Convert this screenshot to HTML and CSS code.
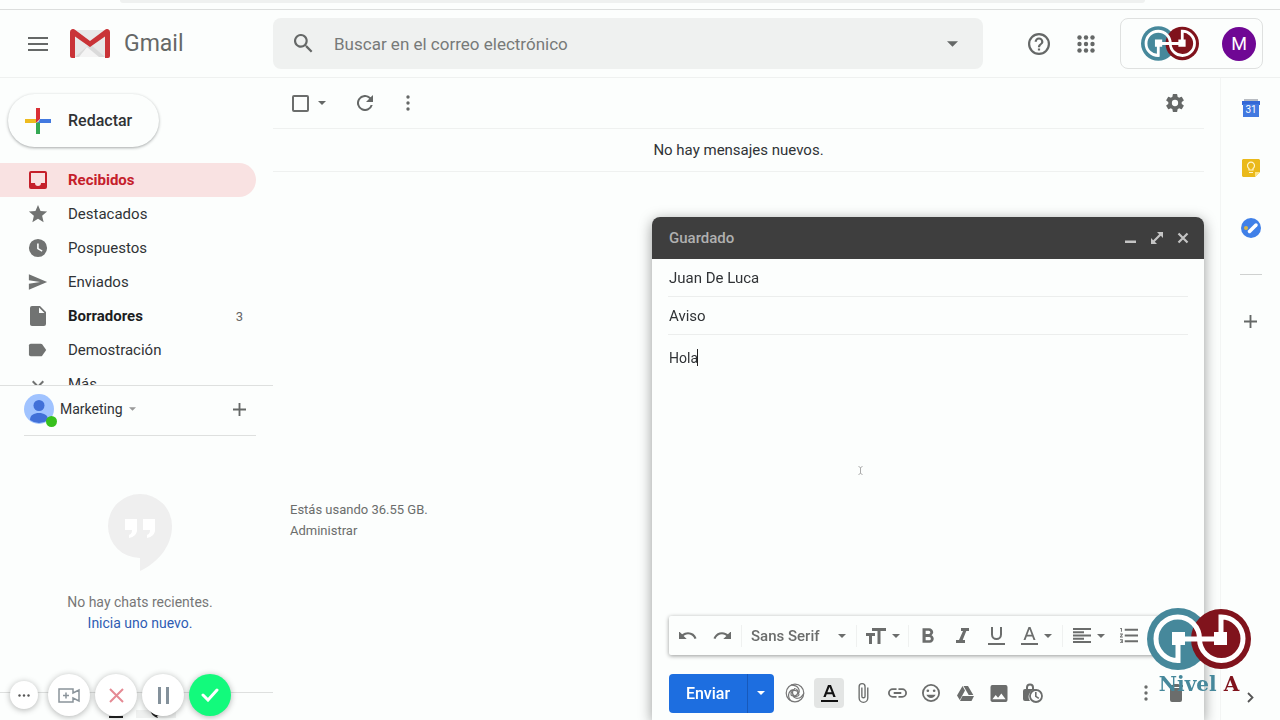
FILE: index.html
```html
<!DOCTYPE html>
<html lang="es">
<head>
    <meta charset="UTF-8">
    <meta name="viewport" content="width=device-width, initial-scale=1.0">
    <title>Recibidos - Gmail</title>
    <link rel="stylesheet" href="styles.css">
</head>
<body>

<svg class="sprite" aria-hidden="true">
    <symbol id="caret" viewBox="0 0 10 5"><path d="M0 0h10L5 5z"/></symbol>
    <symbol id="dots" viewBox="0 0 4 16"><circle cx="2" cy="2" r="1.7"/><circle cx="2" cy="8" r="1.7"/><circle cx="2" cy="14" r="1.7"/></symbol>
    <symbol id="plus" viewBox="0 0 14 14"><path d="M6 0h2v6h6v2H8v6H6V8H0V6h6z"/></symbol>
    <symbol id="inbox" viewBox="2 2 20 20"><path d="M19 3H5a2 2 0 0 0-2 2v14a2 2 0 0 0 2 2h14a2 2 0 0 0 2-2V5a2 2 0 0 0-2-2zm0 12h-4a3 3 0 0 1-6 0H5V5h14z"/></symbol>
    <symbol id="star" viewBox="1 1 22 22"><path d="M12 17.27 18.18 21l-1.64-7.03L22 9.24l-7.19-.61L12 2 9.19 8.63 2 9.24l5.46 4.73L5.82 21z"/></symbol>
    <symbol id="clock" viewBox="1 1 22 22"><path d="M12 2a10 10 0 1 0 0 20 10 10 0 0 0 0-20zm4.2 14.2L11 13V7h1.8v5.2l4.2 2.5z"/></symbol>
    <symbol id="send" viewBox="1 1 23 22"><path d="M2 21 23 12 2 3v7l13 2-13 2z"/></symbol>
    <symbol id="draft" viewBox="2 2 20 20"><path d="M6 2a2 2 0 0 0-2 2v16c0 1.100.9 2 2 2h12a2 2 0 0 0 2-2V8l-6-6zm7 7V3.500L18.500 9z"/></symbol>
    <symbol id="label" viewBox="2 1 22 22"><path d="M17.600 5.800A2 2 0 0 0 16 5H5a2 2 0 0 0-2 2v10a2 2 0 0 0 2 2h11a2 2 0 0 0 1.600-.8L22 12z"/></symbol>
    <symbol id="logo" viewBox="0 0 104 62">
        <circle class="teal" cx="31" cy="31" r="31"/>
        <circle class="wine" cx="74" cy="31" r="30"/>
        <path class="logo-line" d="M31 31V52.500A21.750 21.750 0 1 1 52.500 31A21.750 21.750 0 1 0 74 9V31M31 31H74"/>
        <path fill="#fff" d="M25 24h13v13H25zM67 24h13v13H67z"/>
    </symbol>
</svg>

<div class="tabstrip"></div>

<header class="topbar">
    <div class="brand">
        <button class="icon-btn menu" aria-label="Menú principal">
            <svg width="20" height="14" viewBox="0 0 20 14"><path d="M0 0h20v2H0zM0 6h20v2H0zM0 12h20v2H0z"/></svg>
        </button>
        <svg class="envelope" width="40" height="29" viewBox="0 0 40 29">
            <path fill="#e8e8e8" d="M2 1h36v27H2z"/>
            <path fill="#dadada" d="M5 28 20 15l15 13z"/>
            <path fill="#f4f4f4" d="M9 28 17 18l12 10z"/>
            <path fill="#c93337" d="M0 3a3 3 0 0 1 5-2.200L20 12 35 .8A3 3 0 0 1 40 3v24a2 2 0 0 1-2 2h-3V7.500L20 18 5 7.500V29H2a2 2 0 0 1-2-2z"/>
        </svg>
        <span class="brand-name">Gmail</span>
    </div>
    <form class="search">
        <button type="button" class="icon-btn" aria-label="Buscar">
            <svg width="19" height="19" viewBox="3 3 18 18"><path d="M15.500 14h-.79l-.28-.27a6.500 6.500 0 1 0-.7.7l.27.28v.79l5 4.990L20.490 19zm-6 0a4.500 4.500 0 1 1 0-9 4.500 4.500 0 0 1 0 9z"/></svg>
        </button>
        <input type="search" aria-label="Buscar en el correo electrónico" placeholder="Buscar en el correo electrónico">
        <button type="button" class="icon-btn" aria-label="Opciones de búsqueda"><svg width="11" height="6"><use href="#caret"/></svg></button>
    </form>
    <div class="account-area">
        <button class="icon-btn" aria-label="Ayuda">
            <svg width="22" height="22" viewBox="2 2 20 20"><path d="M11 18h2v-2h-2zm1-16a10 10 0 1 0 0 20 10 10 0 0 0 0-20zm0 18a8 8 0 1 1 0-16 8 8 0 0 1 0 16zm0-14a4 4 0 0 0-4 4h2a2 2 0 0 1 4 0c0 2-3 1.750-3 5h2c0-2.250 3-2.500 3-5a4 4 0 0 0-4-4z"/></svg>
        </button>
        <button class="icon-btn" aria-label="Aplicaciones de Google">
            <svg width="18" height="18" viewBox="0 0 18 18"><circle cx="2.500" cy="2.500" r="2.200"/><circle cx="9" cy="2.500" r="2.200"/><circle cx="15.500" cy="2.500" r="2.200"/><circle cx="2.500" cy="9" r="2.200"/><circle cx="9" cy="9" r="2.200"/><circle cx="15.500" cy="9" r="2.200"/><circle cx="2.500" cy="15.500" r="2.200"/><circle cx="9" cy="15.500" r="2.200"/><circle cx="15.500" cy="15.500" r="2.200"/></svg>
        </button>
        <div class="account">
            <svg width="58" height="35"><use href="#logo"/></svg>
            <button class="avatar" aria-label="Cuenta de Google">M</button>
        </div>
    </div>
</header>

<div class="layout">
    <aside class="sidebar">
        <button class="compose-btn">
            <svg width="26" height="26" viewBox="0 0 26 26"><path fill="#d93036" d="M11 0h4v11l-4 4z"/><path fill="#eebb20" d="M0 11h11v4H0z"/><path fill="#34a853" d="M11 15l4-2v13h-4z"/><path fill="#4279e0" d="M15 11h11v4H13z"/></svg>
            Redactar
        </button>
        <nav class="folders">
            <a href="#" class="folder active"><svg width="20" height="20"><use href="#inbox"/></svg>Recibidos</a>
            <a href="#" class="folder"><svg width="20" height="20"><use href="#star"/></svg>Destacados</a>
            <a href="#" class="folder"><svg width="20" height="20"><use href="#clock"/></svg>Pospuestos</a>
            <a href="#" class="folder"><svg width="20" height="20"><use href="#send"/></svg>Enviados</a>
            <a href="#" class="folder unread"><svg width="20" height="20"><use href="#draft"/></svg>Borradores<span class="count">3</span></a>
            <a href="#" class="folder"><svg width="20" height="20"><use href="#label"/></svg>Demostración</a>
            <a href="#" class="folder"><svg width="20" height="20" viewBox="2 2 20 20"><path d="M16.590 8.590 12 13.170 7.410 8.590 6 10l6 6 6-6z"/></svg>Más</a>
        </nav>
        <section class="chat">
            <div class="chat-user">
                <span class="chat-photo">
                    <svg width="30" height="30" viewBox="0 0 30 30"><circle cx="15" cy="15" r="15" fill="#a0c3ff"/><circle cx="15" cy="11.500" r="5.500" fill="#4170d8"/><path fill="#4170d8" d="M6 26c0-5 4-7 9-7s9 2 9 7a15 15 0 0 1-18 0z"/></svg>
                    <span class="online"></span>
                </span>
                <button class="chat-name">Marketing <svg width="7" height="4"><use href="#caret"/></svg></button>
                <button class="icon-btn new-chat" aria-label="Nueva conversación"><svg width="13" height="13"><use href="#plus"/></svg></button>
            </div>
            <div class="chat-empty">
                <svg width="64" height="77" viewBox="0 0 64 77"><path fill="#efefef" d="M32 0a32 32 0 0 0 0 64v13c17-8 32-24 32-45A32 32 0 0 0 32 0z"/><path fill="#fff" d="M17 25h12v11c0 4-3 7-8 8v-3c2-1 3-2 3-5h-7zM35 25h12v11c0 4-3 7-8 8v-3c2-1 3-2 3-5h-7z"/></svg>
                <p>No hay chats recientes.<br><a href="#">Inicia uno nuevo.</a></p>
            </div>
            <div class="chat-tabs">
                <svg width="14" height="3" viewBox="0 0 14 3"><path d="M0 1h14v2H0z"/></svg>
                <span class="chat-tab"><svg width="12" height="8" viewBox="0 0 12 8"><path d="M0 0c2 4 6 5 11 5l-4 1 1 2C4 7 1 4 0 0z"/></svg></span>
            </div>
        </section>
    </aside>

    <main class="mail">
        <div class="mail-tools">
            <input type="checkbox" class="select-all" aria-label="Seleccionar">
            <button class="icon-btn" aria-label="Opciones de selección"><svg width="8" height="4"><use href="#caret"/></svg></button>
            <button class="icon-btn refresh" aria-label="Actualizar">
                <svg width="16" height="16" viewBox="4 4 16 16"><path d="M17.650 6.350A8 8 0 1 0 19.730 14h-2.080A6 6 0 1 1 12 6c1.660 0 3.140.690 4.220 1.780L13 11h7V4z"/></svg>
            </button>
            <button class="icon-btn more" aria-label="Más"><svg width="4" height="16"><use href="#dots"/></svg></button>
            <button class="icon-btn settings" aria-label="Configuración">
                <svg width="18" height="18" viewBox="2 2 20 20"><path d="M19.430 12.980a7.800 7.800 0 0 0 0-1.960l2.110-1.650a.5.5 0 0 0 .12-.64l-2-3.460a.5.5 0 0 0-.61-.22l-2.490 1a7.300 7.300 0 0 0-1.690-.98l-.38-2.650A.5.5 0 0 0 14 2h-4a.5.5 0 0 0-.49.42l-.38 2.650c-.61.25-1.170.59-1.690.98l-2.490-1a.5.5 0 0 0-.61.22l-2 3.460a.5.5 0 0 0 .12.64l2.110 1.650a8 8 0 0 0 0 1.960l-2.110 1.650a.5.5 0 0 0-.12.64l2 3.460c.12.22.39.3.61.22l2.490-1c.52.4 1.080.73 1.690.98l.38 2.650c.03.24.24.42.49.42h4c.25 0 .46-.18.49-.42l.38-2.650c.61-.25 1.170-.59 1.690-.98l2.490 1c.23.09.49 0 .61-.22l2-3.460a.5.5 0 0 0-.12-.64zM12 15.500a3.500 3.500 0 1 1 0-7 3.500 3.500 0 0 1 0 7z"/></svg>
            </button>
        </div>
        <p class="empty">No hay mensajes nuevos.</p>
        <p class="storage">Estás usando 36.55 GB.<br><a href="#">Administrar</a></p>
    </main>

    <aside class="addons">
        <button class="icon-btn" aria-label="Calendar">
            <svg width="18" height="18" viewBox="0 0 18 18"><path fill="#b8bcc2" d="M2 0h14v4H2z"/><path fill="#3367d6" d="M0 2h18v4H0z"/><path fill="#4279e0" d="M1 5h16v13H1z"/><text x="9" y="14" class="cal-day">31</text></svg>
        </button>
        <button class="icon-btn" aria-label="Keep">
            <svg width="18" height="18" viewBox="0 0 18 18"><path fill="#eab91b" d="M1 0h16l1 1v12l-5 5H1l-1-1V1z"/><path fill="#fde488" d="M13 18v-5h5z"/><path fill="none" stroke="#fff6cf" stroke-width="1.200" d="M7 11V9.500a3.500 3.500 0 1 1 4 0V11zM7 13.500h4"/></svg>
        </button>
        <button class="icon-btn" aria-label="Tasks">
            <svg width="20" height="20" viewBox="0 0 20 20"><circle cx="10" cy="10" r="10" fill="#4080e8"/><circle cx="5" cy="10" r="2" fill="#d8b64a"/><path stroke="#fff" stroke-width="3.500" stroke-linecap="round" d="M8.500 13.500 15 7"/></svg>
        </button>
        <hr>
        <button class="icon-btn" aria-label="Obtener complementos"><svg width="13" height="13"><use href="#plus"/></svg></button>
        <button class="icon-btn collapse" aria-label="Ocultar panel lateral"><svg width="7" height="11" viewBox="0 0 7 11"><path fill="none" stroke="#555" stroke-width="1.800" d="m1 1 4.500 4.500L1 10"/></svg></button>
    </aside>
</div>

<section class="compose">
    <div class="compose-head">
        <h2>Guardado</h2>
        <button aria-label="Minimizar"><svg width="12" height="12" viewBox="0 0 12 12"><path d="M0 8.500h11V11H0z"/></svg></button>
        <button aria-label="Pantalla completa"><svg width="12" height="12" viewBox="0 0 12 12"><path d="M6 0h6v6L9.800 3.800 3.800 9.800 6 12H0V6l2.200 2.200 6-6z"/></svg></button>
        <button aria-label="Cerrar"><svg width="12" height="12" viewBox="0 0 12 12"><path fill="none" stroke="#c4c4c4" stroke-width="2.200" d="m1.500 1.500 9 9M10.500 1.500l-9 9"/></svg></button>
    </div>
    <div class="compose-fields">
        <input type="text" aria-label="Para" value="Juan De Luca">
        <input type="text" aria-label="Asunto" value="Aviso">
        <div class="message">
            <textarea aria-label="Cuerpo del mensaje">Hola</textarea>
            <span class="text-cursor"></span>
            <svg class="pointer" width="5" height="9" viewBox="0 0 5 9"><path fill="none" stroke="#aaa" d="M.5.500 2.500 1.500l2-1M2.500 1.500v6M.5 8.500l2-1 2 1"/></svg>
        </div>
        <div class="format">
            <button aria-label="Deshacer"><svg width="18" height="8" viewBox="2 8 21 9"><path d="M12.500 8a10.500 10.500 0 0 0-6.900 2.600L2 7v9h9l-3.620-3.620A8 8 0 0 1 20.100 16l2.370-.78A10.500 10.500 0 0 0 12.500 8z"/></svg></button>
            <button aria-label="Rehacer"><svg width="18" height="8" viewBox="1 8 21 9"><path d="M18.400 10.600A10.500 10.500 0 0 0 1.540 15.220L3.900 16a8 8 0 0 1 12.720-3.620L13 16h9V7z"/></svg></button>
            <span class="sep"></span>
            <span class="font-pick">
                <select aria-label="Fuente"><option>Sans Serif</option></select>
                <svg width="8" height="4"><use href="#caret"/></svg>
            </span>
            <span class="sep"></span>
            <button class="wide" aria-label="Tamaño"><svg width="20" height="16" viewBox="0 0 20 16"><path d="M6 0h14v3h-5.500v13h-3V3H6zM0 5h9v3H6v8H3V8H0z"/></svg><svg width="8" height="4"><use href="#caret"/></svg></button>
            <span class="sep"></span>
            <button aria-label="Negrita"><svg width="12" height="15" viewBox="6.500 4 11.500 14"><path d="M15.600 10.790c.97-.67 1.650-1.770 1.650-2.790 0-2.260-1.750-4-4-4H7v14h7.040c2.090 0 3.710-1.700 3.710-3.790 0-1.520-.86-2.820-2.150-3.420zM10 6.500h3a1.500 1.500 0 0 1 0 3h-3zm3.500 9H10v-3h3.500a1.500 1.500 0 0 1 0 3z"/></svg></button>
            <button aria-label="Cursiva"><svg width="13" height="15" viewBox="0 0 13 15"><path d="M5 0h8v3h-2.700L6.700 12H9v3H0v-3h3L7 3H5z"/></svg></button>
            <button aria-label="Subrayado"><svg width="17" height="18" viewBox="0 0 17 18"><path d="M3 0h2v7.500a3.500 3.500 0 0 0 7 0V0h2v7.500a5.500 5.500 0 0 1-11 0zM0 16h17v2H0z"/></svg></button>
            <button class="wide" aria-label="Color de texto"><svg width="17" height="18" viewBox="0 0 17 18"><path d="M7.500 0h2L14.500 13h-2L11.200 9.500H5.800L4.500 13h-2zM6.400 7.800h4.200L8.500 2.200zM0 16h17v2H0z"/></svg><svg width="8" height="4"><use href="#caret"/></svg></button>
            <span class="sep"></span>
            <button class="wide" aria-label="Alinear"><svg width="18" height="15" viewBox="0 0 18 15"><path d="M0 0h18v2H0zM0 3.300h11v2H0zM0 6.500h18v2H0zM0 9.800h11v2H0zM0 13h18v2H0z"/></svg><svg width="8" height="4"><use href="#caret"/></svg></button>
            <button aria-label="Lista numerada"><svg width="18" height="17" viewBox="2 4 19 16"><path d="M2 17h2v.5H3v1h1v.5H2v1h3v-4H2zM3 8h1V4H2v1h1zM2 11h1.800L2 13.100v.9h3v-1H3.200L5 10.900V10H2zM7 5v2h14V5zM7 19h14v-2H7zM7 13h14v-2H7z"/></svg></button>
        </div>
    </div>
    <div class="compose-actions">
        <div class="send">
            <button class="send-main">Enviar</button>
            <button class="send-more" aria-label="Más opciones de envío"><svg width="8" height="4"><use href="#caret"/></svg></button>
        </div>
        <button aria-label="Seguimiento">
            <svg width="20" height="20" viewBox="-10 -10 20 20"><g fill="none" stroke="#777" stroke-width="1.200"><circle r="8.800"/><path id="swirl" d="M-4-7.800C3-8 6-3 3 1.500M-1-4.500C4-4 4 1 0 3"/><use href="#swirl" transform="rotate(120)"/><use href="#swirl" transform="rotate(240)"/></g></svg>
        </button>
        <button class="pressed" aria-label="Opciones de formato"><svg width="17" height="17" viewBox="0 0 17 17"><path d="M7 0h3l4.700 12h-2.400l-1-2.700H5.700l-1 2.700H2.300zM6.400 7.300h4.200L8.500 1.900zM0 15h17v2H0z"/></svg></button>
        <button aria-label="Adjuntar archivos"><svg width="12" height="20" viewBox="6 1 12 22"><path d="M16.500 6v11.500a4 4 0 0 1-8 0V5a2.500 2.500 0 0 1 5 0v10.500a1 1 0 0 1-2 0V6H10v9.500a2.500 2.500 0 0 0 5 0V5a4 4 0 0 0-8 0v12.500a5.500 5.500 0 0 0 11 0V6z"/></svg></button>
        <button aria-label="Insertar vínculo"><svg width="19" height="10" viewBox="2 7 20 10"><path d="M3.900 12A3.100 3.100 0 0 1 7 8.900h4V7H7a5 5 0 0 0 0 10h4v-1.900H7A3.100 3.100 0 0 1 3.900 12zM8 13h8v-2H8zm9-6h-4v1.900h4a3.100 3.100 0 0 1 0 6.200h-4V17h4a5 5 0 0 0 0-10z"/></svg></button>
        <button aria-label="Insertar emoji"><svg width="18" height="18" viewBox="2 2 20 20"><path d="M12 2a10 10 0 1 0 0 20 10 10 0 0 0 0-20zm0 18a8 8 0 1 1 0-16 8 8 0 0 1 0 16zm3.500-9a1.500 1.500 0 1 0 0-3 1.500 1.500 0 0 0 0 3zm-7 0a1.500 1.500 0 1 0 0-3 1.500 1.500 0 0 0 0 3zM12 17.500c2.330 0 4.310-1.460 5.110-3.500H6.890c.8 2.040 2.780 3.500 5.110 3.500z"/></svg></button>
        <button aria-label="Insertar desde Drive"><svg width="17" height="15" viewBox="0 0 17 15"><path d="M5.500 0 8 4.500 2.800 14 0 9.500zM6.500 0h4.500l5.300 9h-4.600zM5.500 10H17l-2.500 5H3z"/></svg></button>
        <button aria-label="Insertar foto"><svg width="18" height="17" viewBox="3 3 18 18"><path d="M21 19V5a2 2 0 0 0-2-2H5a2 2 0 0 0-2 2v14c0 1.100.9 2 2 2h14a2 2 0 0 0 2-2zM8.500 13.500l2.500 3 3.500-4.500 4.500 6H5z"/></svg></button>
        <button aria-label="Modo confidencial"><svg width="20" height="20" viewBox="0 0 20 20"><path d="M3 6V4.500a4 4 0 0 1 8 0V6h1a2 2 0 0 1 2 1 7 7 0 0 0-7 11H2a2 2 0 0 1-2-2V8a2 2 0 0 1 2-2zm2 0h4V4.500a2 2 0 0 0-4 0z"/><circle cx="13" cy="13" r="6" fill="#fcfdfd" stroke="#6b6d6c" stroke-width="1.800"/><path fill="none" stroke="#6b6d6c" stroke-width="1.600" d="M12.800 9v4.300l3 2"/></svg></button>
        <button class="push" aria-label="Más opciones"><svg width="4" height="16"><use href="#dots"/></svg></button>
        <button class="trash" aria-label="Descartar borrador"><svg width="14" height="18" viewBox="5 3 14 18"><path d="M6 19a2 2 0 0 0 2 2h8a2 2 0 0 0 2-2V7H6zM19 4h-3.500l-1-1h-5l-1 1H5v2h14z"/></svg></button>
    </div>
</section>

<div class="watermark">
    <svg width="104" height="62"><use href="#logo"/></svg>
    <span>Nivel <b>A</b></span>
</div>

<div class="recorder">
    <button class="small" aria-label="Opciones"><svg width="12" height="3" viewBox="0 0 12 3"><circle cx="1.500" cy="1.500" r="1.200"/><circle cx="6" cy="1.500" r="1.200"/><circle cx="10.500" cy="1.500" r="1.200"/></svg></button>
    <button aria-label="Cámara"><svg width="22" height="15" viewBox="0 0 22 15"><path fill="none" stroke="#8b949b" stroke-width="1.500" d="M1 1h14v4l6-3v11l-6-3v4H1zM8 4.500v6M5 7.500h6"/></svg></button>
    <button aria-label="Cancelar"><svg width="15" height="15" viewBox="0 0 15 15"><path stroke="#e58a94" stroke-width="2" d="m1 1 13 13M14 1 1 14"/></svg></button>
    <button aria-label="Pausa"><svg width="11" height="17" viewBox="0 0 11 17"><path fill="#84919b" d="M0 0h3v17H0zM8 0h3v17H8z"/></svg></button>
    <button class="done" aria-label="Finalizar"><svg width="18" height="14" viewBox="0 0 18 14"><path fill="none" stroke="#fff" stroke-width="3" stroke-linecap="round" d="m2 7 5 5 9-10"/></svg></button>
</div>

</body>
</html>
```

FILE: styles.css
```css
* {
    box-sizing: border-box;
}

body {
    display: flex;
    flex-direction: column;
    height: 100vh;
    margin: 0;
    overflow: hidden;
    background-color: #fcfefd;
    color: #303336;
    font-family: Roboto, "Liberation Sans", sans-serif;
    font-size: 15px;
}

a {
    color: inherit;
    text-decoration: none;
}

p {
    margin: 0;
}

svg {
    display: block;
    flex: none;
    fill: currentColor;
}

.sprite {
    position: absolute;
    width: 0;
    height: 0;
}

button,
input,
select,
textarea {
    margin: 0;
    padding: 0;
    border: none;
    outline: none;
    background: none;
    color: inherit;
    font: inherit;
}

button {
    display: flex;
    align-items: center;
    justify-content: center;
    cursor: pointer;
}

.icon-btn {
    width: 32px;
    height: 32px;
    color: #656867;
}

/* browser edge */
.tabstrip {
    flex: none;
    height: 10px;
    border-bottom: 1px solid #dcdedd;
}

.tabstrip::before {
    content: "";
    display: block;
    height: 3px;
    margin: 0 135px 0 120px;
    border-radius: 0 0 8px 8px;
    background-color: #eff1f0;
}

/* header */
.topbar {
    flex: none;
    display: grid;
    grid-template-columns: 273px minmax(0, 1fr) 297px;
    align-items: center;
    height: 68px;
    border-bottom: 1px solid #eff1f0;
}

.brand {
    display: flex;
    align-items: center;
    padding-left: 22px;
}

.envelope {
    margin-left: 16px;
}

.brand-name {
    margin-left: 14px;
    color: #656867;
    font-size: 23px;
}

.search {
    display: flex;
    align-items: center;
    height: 51px;
    padding: 0 15px 0 14px;
    border-radius: 8px;
    background-color: #eff1f0;
}

.search input {
    flex: 1;
    min-width: 0;
    margin-left: 15px;
    font-size: 17px;
}

.search input::placeholder {
    color: #777a79;
    opacity: 1;
}

.account-area {
    display: flex;
    align-items: center;
    gap: 15px;
    padding: 0 17px 0 40px;
}

.account {
    flex: 1;
    display: flex;
    align-items: center;
    justify-content: space-between;
    height: 51px;
    margin-left: 3px;
    padding: 0 6px 0 20px;
    border: 1px solid #dfe1e0;
    border-radius: 8px;
}

.avatar {
    width: 34px;
    height: 34px;
    border-radius: 50%;
    background-color: #6f0794;
    color: #fff;
    font-size: 18px;
}

.teal {
    fill: #46889b;
}

.wine {
    fill: #80131c;
}

.logo-line {
    fill: none;
    stroke: #fff;
    stroke-width: 5;
}

.layout {
    flex: 1;
    min-height: 0;
    display: grid;
    grid-template-columns: 273px minmax(0, 1fr) 60px;
}

/* sidebar */
.sidebar {
    display: flex;
    flex-direction: column;
    min-height: 0;
    padding-top: 16px;
}

.compose-btn {
    flex: none;
    align-self: flex-start;
    gap: 17px;
    height: 53px;
    margin-left: 8px;
    padding: 0 27px 0 17px;
    border-radius: 27px;
    box-shadow: 0 1px 3px rgba(60, 64, 67, 0.45);
    font-size: 16px;
    font-weight: 500;
}

.folders {
    flex: none;
    height: 222px;
    margin-top: 16px;
    overflow: hidden;
}

.folder {
    display: flex;
    align-items: center;
    gap: 20px;
    height: 34px;
    margin-right: 17px;
    padding: 0 13px 0 28px;
    border-radius: 0 17px 17px 0;
}

.folder svg {
    color: #717372;
}

.folder.active {
    background-color: #f9e2e2;
    color: #c5202b;
    font-weight: 700;
}

.folder.active svg {
    color: #c5202b;
}

.folder.unread {
    color: #1c1e1f;
    font-weight: 700;
}

.count {
    margin-left: auto;
    color: #666;
    font-size: 13px;
    font-weight: 400;
}

.chat {
    flex: 1;
    display: flex;
    flex-direction: column;
    min-height: 0;
    border-top: 1px solid #dee0df;
}

.chat-user {
    display: flex;
    align-items: center;
    height: 50px;
    margin: 0 17px 0 24px;
    padding-bottom: 3px;
    border-bottom: 1px solid #dee0df;
}

.chat-photo {
    position: relative;
}

.online {
    position: absolute;
    right: -3px;
    bottom: -3px;
    width: 11px;
    height: 11px;
    border-radius: 50%;
    background-color: #37c01d;
}

.chat-name {
    gap: 6px;
    margin-left: 6px;
    font-size: 14px;
}

.chat-name svg {
    color: #999;
}

.new-chat {
    width: 34px;
    margin-left: auto;
}

.chat-empty {
    flex: 1;
    display: flex;
    flex-direction: column;
    align-items: center;
    gap: 21px;
    margin: 0 17px 0 24px;
    padding-top: 58px;
    color: #777;
    font-size: 14px;
    line-height: 21px;
    text-align: center;
}

.chat-empty a {
    color: #2f5cb3;
}

.chat-tabs {
    display: flex;
    align-items: flex-end;
    gap: 13px;
    height: 28px;
    padding: 0 0 2px 109px;
    border-top: 1px solid #dee0df;
    color: #222;
}

.chat-tab {
    display: flex;
    justify-content: center;
    width: 40px;
    background-color: #eff1f0;
}

/* message list */
.mail {
    padding-right: 16px;
}

.mail-tools {
    display: flex;
    align-items: center;
    height: 51px;
    padding: 0 13px 0 19px;
    border-bottom: 1px solid #eff1f0;
}

.select-all {
    appearance: none;
    width: 17px;
    height: 17px;
    border: 2px solid #6b6d6c;
    border-radius: 2px;
}

.mail-tools .select-all + .icon-btn {
    width: 26px;
}

.refresh {
    margin-left: 14px;
}

.more {
    margin-left: 11px;
}

.settings {
    margin-left: auto;
}

.empty {
    height: 43px;
    border-bottom: 1px solid #eff1f0;
    line-height: 42px;
    text-align: center;
}

.storage {
    padding: 327px 0 0 17px;
    color: #6b6d6c;
    font-size: 13px;
    line-height: 21px;
}

/* add-on panel */
.addons {
    display: flex;
    flex-direction: column;
    align-items: center;
    gap: 28px;
    padding: 14px 0 7px;
    border-left: 1px solid #f3f5f4;
}

.addons hr {
    width: 22px;
    margin: 2px 0;
    border: none;
    border-top: 1px solid #cfd1d0;
}

.cal-day {
    fill: #fff;
    font-size: 10px;
    text-anchor: middle;
}

.collapse {
    margin-top: auto;
}

/* compose window */
.compose {
    position: fixed;
    right: 76px;
    bottom: 0;
    display: flex;
    flex-direction: column;
    width: 552px;
    height: 503px;
    border-radius: 8px 8px 0 0;
    background-color: #fcfefd;
    box-shadow: 0 3px 14px rgba(0, 0, 0, 0.4);
}

.compose-head {
    display: flex;
    align-items: center;
    height: 42px;
    padding: 0 8px 0 17px;
    border-radius: 8px 8px 0 0;
    background-color: #3e3e3e;
    color: #c4c4c4;
}

.compose-head h2 {
    margin: 0 auto 0 0;
    color: #b0b0b0;
    font-size: 15px;
    font-weight: 500;
}

.compose-head button {
    width: 26px;
    height: 26px;
}

.compose-fields {
    flex: 1;
    display: flex;
    flex-direction: column;
    margin: 0 16px;
}

.compose-fields > input {
    height: 38px;
    padding-left: 1px;
    border-bottom: 1px solid #eceeed;
}

.message {
    position: relative;
    flex: 1;
}

.message textarea {
    display: block;
    width: 100%;
    height: 100%;
    padding: 13px 1px;
    font-size: 14px;
    line-height: 20px;
    resize: none;
}

.text-cursor {
    position: absolute;
    top: 14px;
    left: 29px;
    width: 1px;
    height: 17px;
    background-color: #222;
}

.pointer {
    position: absolute;
    top: 131px;
    left: 190px;
}

.format {
    display: flex;
    align-items: center;
    height: 39px;
    margin-left: 1px;
    padding-left: 2px;
    border-radius: 2px;
    box-shadow: 0 1px 4px rgba(0, 0, 0, 0.4);
    color: #6b6d6c;
}

.format button {
    width: 34px;
    height: 34px;
}

.format .wide {
    gap: 6px;
    width: 47px;
}

.sep {
    width: 1px;
    height: 22px;
    margin: 0 2px;
    background-color: #eff1f0;
}

.font-pick {
    display: flex;
    align-items: center;
    width: 110px;
    padding: 0 8px 0 7px;
}

.font-pick select {
    flex: 1;
    min-width: 0;
    appearance: none;
    font-weight: 500;
}

.compose-actions {
    display: flex;
    align-items: center;
    height: 65px;
    padding: 11px 13px 0 17px;
    color: #6b6d6c;
}

.compose-actions > button {
    width: 34px;
    height: 30px;
}

.compose-actions > .pressed {
    width: 30px;
    margin: 0 2px;
    border-radius: 4px;
    background-color: #e3e5e4;
    color: #111;
}

.compose-actions > .push {
    width: 30px;
    margin-left: auto;
}

.compose-actions > .trash {
    width: 30px;
}

.send {
    display: flex;
    height: 39px;
    margin-right: 4px;
    border-radius: 4px;
    overflow: hidden;
    background-color: #1d6ee0;
    color: #fff;
}

.send-main {
    width: 79px;
    border-right: 1px solid #1759bb;
    font-size: 16px;
    font-weight: 500;
}

.send-more {
    width: 26px;
}

/* channel logo over the corner */
.watermark {
    position: fixed;
    right: 29px;
    bottom: 22px;
    display: flex;
    flex-direction: column;
    align-items: center;
    color: #46889b;
    font-family: "DejaVu Serif", serif;
    font-size: 20px;
    font-weight: 700;
    line-height: 28px;
}

.watermark b {
    color: #80131c;
}

/* recorder controls */
.recorder {
    position: fixed;
    left: 10px;
    bottom: 4px;
    display: flex;
    align-items: center;
    gap: 5px;
}

.recorder button {
    width: 42px;
    height: 42px;
    border-radius: 50%;
    background-color: #fff;
    box-shadow: 0 1px 6px rgba(0, 0, 0, 0.3);
    color: #555;
}

.recorder .small {
    width: 28px;
    height: 28px;
    margin-right: 5px;
}

.recorder .done {
    background-color: #12fa7c;
}
```
